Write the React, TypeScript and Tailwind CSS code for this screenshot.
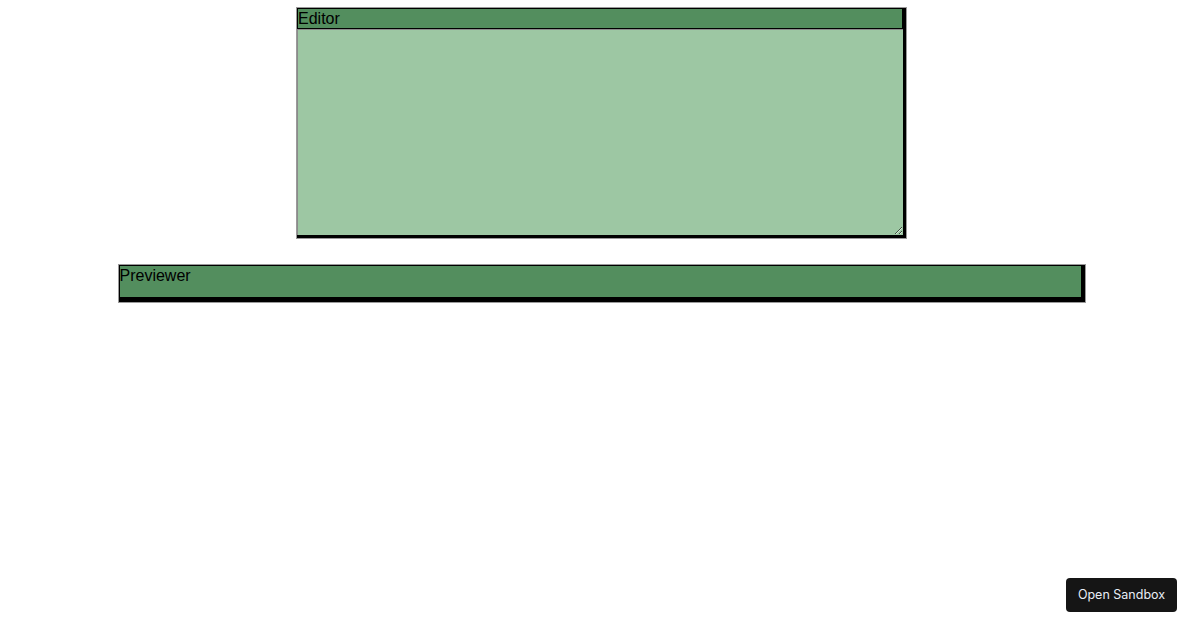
export default function App() {
  return (
    <div className="min-h-[630px] bg-white pl-[3px] font-['Liberation_Sans',Arial,sans-serif] text-black">
      {/* EDITOR */}
      <div className="pt-[7px]">
        <div className="mx-auto w-[611px] border border-[#9a9a9a]">
          <div className="border-r-[3px] border-b-[3px] border-black">
            <div className="h-[21px] border border-black bg-[#538e5e] text-[16px] leading-[19px]">
              Editor
            </div>
            <textarea
              className="block h-[206px] w-full resize-y border-l border-t border-l-[#8a8a8a] border-t-[#8a8a8a] bg-[#9dc7a3] outline-none"
              defaultValue=""
            />
          </div>
        </div>
      </div>

      {/* PREVIEWER */}
      <div className="mt-[25px] mx-auto w-[968px] border border-[#9a9a9a]">
        <div className="border-r-[3px] border-b-[4px] border-black">
          <div className="h-[33px] border border-black bg-[#538e5e] text-[16px] leading-[19px]">
            Previewer
          </div>
        </div>
      </div>

      <button className="fixed right-[23px] bottom-[18px] h-[34px] w-[111px] rounded-[4px] bg-[#151515] text-[12.5px] text-[#e8eef5] font-['Inter',sans-serif]">
        Open Sandbox
      </button>
    </div>
  );
}
